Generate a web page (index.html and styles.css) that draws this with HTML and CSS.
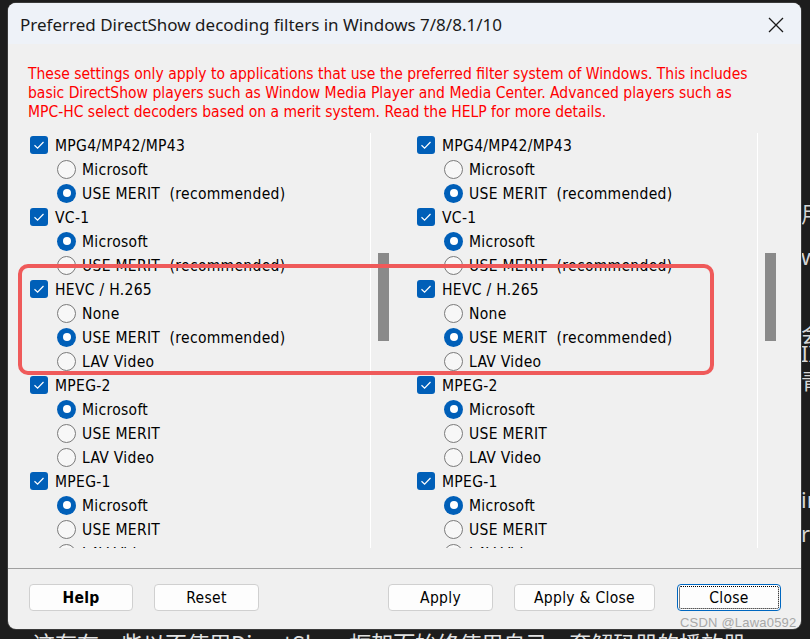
FILE: index.html
```html
<!DOCTYPE html>
<html>
<head>
<meta charset="utf-8">
<title>Preferred DirectShow decoding filters</title>
<link rel="stylesheet" href="styles.css">
</head>
<body>
<div class="desk">
  <div class="behind">
    <span class="bg-glyph g1">用</span>
    <span class="bg-glyph g2">wi</span>
    <span class="bg-glyph g3">会</span>
    <span class="bg-glyph g4">II</span>
    <span class="bg-glyph g5">青</span>
    <span class="bg-glyph g6">in</span>
    <span class="bg-glyph g7">re</span>
    <div class="bg-bottom">这存在一些以不使用DirectShow框架而始终使用自己一套解码器的播放器</div>
  </div>

  <div class="dialog">
    <div class="titlebar">
      <span class="title">Preferred DirectShow decoding filters in Windows 7/8/8.1/10</span>
      <svg class="close-x" width="16" height="16" viewBox="0 0 16 16"><path d="M1 1L15 15M15 1L1 15" stroke="#1a1a1a" stroke-width="1.3" fill="none"/></svg>
    </div>
    <div class="content">
      <p class="notice">These settings only apply to applications that use the preferred filter system of Windows. This includes<br>basic DirectShow players such as Window Media Player and Media Center. Advanced players such as<br>MPC-HC select decoders based on a merit system. Read the HELP for more details.</p>

      <div class="lists">
        <div class="pane">
          <div class="list">
            <div class="row chk"><span class="box"><svg width="18" height="18" viewBox="0 0 18 18"><path d="M4.5 9.2L7.6 12.2L13.5 6" stroke="#fff" stroke-width="1.2" fill="none"/></svg></span><span class="lbl">MPG4/MP42/MP43</span></div>
            <div class="row rad"><span class="radio"></span><span class="lbl">Microsoft</span></div>
            <div class="row rad"><span class="radio on"></span><span class="lbl">USE MERIT&nbsp;&nbsp;(recommended)</span></div>
            <div class="row chk"><span class="box"><svg width="18" height="18" viewBox="0 0 18 18"><path d="M4.5 9.2L7.6 12.2L13.5 6" stroke="#fff" stroke-width="1.2" fill="none"/></svg></span><span class="lbl">VC-1</span></div>
            <div class="row rad"><span class="radio on"></span><span class="lbl">Microsoft</span></div>
            <div class="row rad"><span class="radio"></span><span class="lbl">USE MERIT&nbsp;&nbsp;(recommended)</span></div>
            <div class="row chk"><span class="box"><svg width="18" height="18" viewBox="0 0 18 18"><path d="M4.5 9.2L7.6 12.2L13.5 6" stroke="#fff" stroke-width="1.2" fill="none"/></svg></span><span class="lbl">HEVC / H.265</span></div>
            <div class="row rad"><span class="radio"></span><span class="lbl">None</span></div>
            <div class="row rad"><span class="radio on"></span><span class="lbl">USE MERIT&nbsp;&nbsp;(recommended)</span></div>
            <div class="row rad"><span class="radio"></span><span class="lbl">LAV Video</span></div>
            <div class="row chk"><span class="box"><svg width="18" height="18" viewBox="0 0 18 18"><path d="M4.5 9.2L7.6 12.2L13.5 6" stroke="#fff" stroke-width="1.2" fill="none"/></svg></span><span class="lbl">MPEG-2</span></div>
            <div class="row rad"><span class="radio on"></span><span class="lbl">Microsoft</span></div>
            <div class="row rad"><span class="radio"></span><span class="lbl">USE MERIT</span></div>
            <div class="row rad"><span class="radio"></span><span class="lbl">LAV Video</span></div>
            <div class="row chk"><span class="box"><svg width="18" height="18" viewBox="0 0 18 18"><path d="M4.5 9.2L7.6 12.2L13.5 6" stroke="#fff" stroke-width="1.2" fill="none"/></svg></span><span class="lbl">MPEG-1</span></div>
            <div class="row rad"><span class="radio on"></span><span class="lbl">Microsoft</span></div>
            <div class="row rad"><span class="radio"></span><span class="lbl">USE MERIT</span></div>
            <div class="row rad"><span class="radio"></span><span class="lbl">LAV Video</span></div>
          </div>
          <div class="track"><div class="thumb"></div></div>
        </div>
        <div class="pane">
          <div class="list">
            <div class="row chk"><span class="box"><svg width="18" height="18" viewBox="0 0 18 18"><path d="M4.5 9.2L7.6 12.2L13.5 6" stroke="#fff" stroke-width="1.2" fill="none"/></svg></span><span class="lbl">MPG4/MP42/MP43</span></div>
            <div class="row rad"><span class="radio"></span><span class="lbl">Microsoft</span></div>
            <div class="row rad"><span class="radio on"></span><span class="lbl">USE MERIT&nbsp;&nbsp;(recommended)</span></div>
            <div class="row chk"><span class="box"><svg width="18" height="18" viewBox="0 0 18 18"><path d="M4.5 9.2L7.6 12.2L13.5 6" stroke="#fff" stroke-width="1.2" fill="none"/></svg></span><span class="lbl">VC-1</span></div>
            <div class="row rad"><span class="radio on"></span><span class="lbl">Microsoft</span></div>
            <div class="row rad"><span class="radio"></span><span class="lbl">USE MERIT&nbsp;&nbsp;(recommended)</span></div>
            <div class="row chk"><span class="box"><svg width="18" height="18" viewBox="0 0 18 18"><path d="M4.5 9.2L7.6 12.2L13.5 6" stroke="#fff" stroke-width="1.2" fill="none"/></svg></span><span class="lbl">HEVC / H.265</span></div>
            <div class="row rad"><span class="radio"></span><span class="lbl">None</span></div>
            <div class="row rad"><span class="radio on"></span><span class="lbl">USE MERIT&nbsp;&nbsp;(recommended)</span></div>
            <div class="row rad"><span class="radio"></span><span class="lbl">LAV Video</span></div>
            <div class="row chk"><span class="box"><svg width="18" height="18" viewBox="0 0 18 18"><path d="M4.5 9.2L7.6 12.2L13.5 6" stroke="#fff" stroke-width="1.2" fill="none"/></svg></span><span class="lbl">MPEG-2</span></div>
            <div class="row rad"><span class="radio on"></span><span class="lbl">Microsoft</span></div>
            <div class="row rad"><span class="radio"></span><span class="lbl">USE MERIT</span></div>
            <div class="row rad"><span class="radio"></span><span class="lbl">LAV Video</span></div>
            <div class="row chk"><span class="box"><svg width="18" height="18" viewBox="0 0 18 18"><path d="M4.5 9.2L7.6 12.2L13.5 6" stroke="#fff" stroke-width="1.2" fill="none"/></svg></span><span class="lbl">MPEG-1</span></div>
            <div class="row rad"><span class="radio on"></span><span class="lbl">Microsoft</span></div>
            <div class="row rad"><span class="radio"></span><span class="lbl">USE MERIT</span></div>
            <div class="row rad"><span class="radio"></span><span class="lbl">LAV Video</span></div>
          </div>
          <div class="track"><div class="thumb"></div></div>
        </div>
      </div>

      <div class="sep"></div>

      <div class="buttons">
        <button class="btn w104 bold">Help</button>
        <button class="btn w105">Reset</button>
        <span class="spacer"></span>
        <button class="btn w105">Apply</button>
        <button class="btn w141">Apply &amp; Close</button>
        <button class="btn w104 focus">Close</button>
      </div>
    </div>
  </div>

  <div class="highlight"></div>
  <div class="watermark">CSDN @Lawa0592</div>
</div>
</body>
</html>
```

FILE: styles.css
```css
html, body {
  margin: 0;
  padding: 0;
}
body {
  background: #1c1c1c;
  width: 810px;
  height: 639px;
  overflow: hidden;
}
.desk {
  position: relative;
  width: 810px;
  height: 639px;
  overflow: hidden;
  background: #1d1d1d;
}
.behind {
  position: absolute;
  inset: 0;
  color: #d6d6d6;
  font-family: "Noto Sans CJK SC", "Noto Sans", sans-serif;
}
.bg-glyph {
  position: absolute;
  left: 801px;
  font-size: 22px;
  line-height: 22px;
}
.g1 { top: 201px; }
.g2 { top: 245px; font-family: "Noto Sans", sans-serif; }
.g3 { top: 321px; }
.g4 { top: 342px; font-family: "Noto Sans", sans-serif; }
.g5 { top: 368px; }
.g6 { top: 488px; font-family: "Noto Sans", sans-serif; }
.g7 { top: 522px; font-family: "Noto Sans", sans-serif; }
.bg-bottom {
  position: absolute;
  left: 33px;
  top: 630px;
  font-size: 22px;
  line-height: 24px;
  white-space: nowrap;
  color: #e2e2e2;
}

.dialog {
  position: absolute;
  left: 8px;
  top: 3px;
  width: 793px;
  height: 626px;
  background: #f0f0f0;
  border-radius: 8px;
  overflow: hidden;
  box-shadow: 0 0 0 1px #3a3a3a;
}
.titlebar {
  height: 41px;
  background: #eef2f8;
  display: flex;
  align-items: center;
  justify-content: space-between;
  padding: 0 17px 0 12px;
}
.title {
  font-family: "Noto Sans", "Open Sans", sans-serif;
  font-size: 17px;
  color: #1a1a1a;
  margin-top: 1px;
}
.close-x {
  display: block;
  margin-top: 2px;
}

.content {
  padding-top: 21px;
  font-family: "DejaVu Sans Condensed", "DejaVu Sans", sans-serif;
  font-size: 15.5px;
  color: #000;
}
.notice {
  margin: 0;
  padding-left: 20px;
  line-height: 19px;
  color: #ff0000;
  white-space: nowrap;
}

.lists {
  margin-top: 11px;
  height: 415px;
  padding-left: 14px;
  display: flex;
  overflow: hidden;
}
.pane {
  width: 387px;
  display: flex;
  flex: none;
}
.list {
  box-sizing: border-box;
  width: 349px;
  height: 415px;
  padding-left: 8px;
  border-right: 1px solid #ffffff;
  overflow: hidden;
  letter-spacing: 0.3px;
}
.track {
  padding-left: 7px;
}
.thumb {
  width: 11px;
  height: 88px;
  margin-top: 120px;
  background: #8a8a8a;
}

.row {
  height: 24px;
  display: flex;
  align-items: center;
  white-space: nowrap;
}
.row.rad {
  padding-left: 27px;
}
.lbl {
  padding-top: 2px;
}
.box {
  width: 18px;
  height: 18px;
  border-radius: 3px;
  background: #005fb8;
  margin-right: 7px;
  flex: none;
}
.box svg {
  display: block;
}
.radio {
  box-sizing: border-box;
  width: 19px;
  height: 19px;
  border-radius: 50%;
  border: 1px solid #7a7a7a;
  background: #f7f7f7;
  margin-right: 6px;
  flex: none;
  display: flex;
  align-items: center;
  justify-content: center;
}
.radio.on {
  border: none;
  background: #005fb8;
}
.radio.on::after {
  content: "";
  width: 8px;
  height: 8px;
  border-radius: 50%;
  background: #ffffff;
}

.sep {
  margin-top: 20px;
  height: 1px;
  background: #a0a0a0;
}

.buttons {
  margin-top: 15px;
  display: flex;
  gap: 21px;
  padding: 0 20px 0 21px;
}
.spacer {
  flex: 1;
}
.btn {
  box-sizing: border-box;
  height: 27px;
  background: #fdfdfd;
  border: 1px solid #d0d0d0;
  border-radius: 4px;
  font-family: "DejaVu Sans Condensed", "DejaVu Sans", sans-serif;
  font-size: 15.5px;
  letter-spacing: 0.3px;
  color: #000;
  padding: 1px 0 0;
  flex: none;
}
.btn.bold { font-weight: bold; }
.w104 { width: 104px; }
.w105 { width: 105px; }
.w141 { width: 141px; }
.btn.focus {
  border: 1px solid #0067c0;
  outline: 1px dotted #000;
  outline-offset: -3px;
  margin-left: 1px;
}

.highlight {
  position: absolute;
  left: 18px;
  top: 264px;
  width: 696px;
  height: 111px;
  box-sizing: border-box;
  border: 4px solid #ef5a5a;
  border-radius: 10px;
}
.watermark {
  position: absolute;
  left: 680px;
  top: 615px;
  font-family: "Liberation Sans", sans-serif;
  font-size: 13px;
  color: #a8a8a8;
  letter-spacing: 0.2px;
}
```
